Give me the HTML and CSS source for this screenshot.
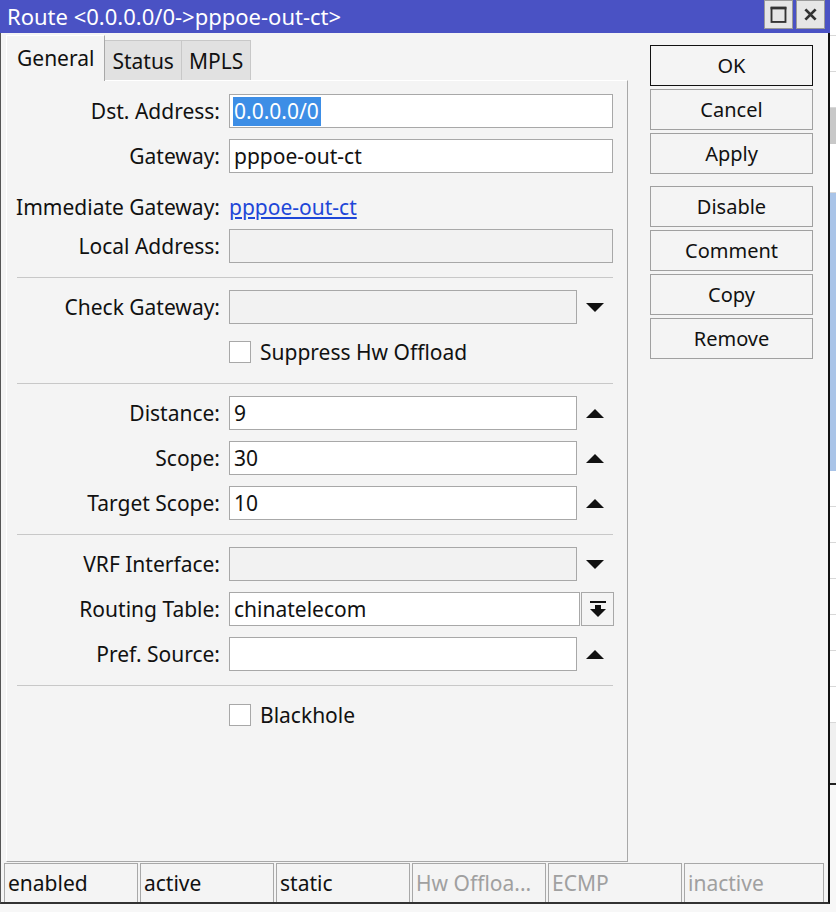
FILE: index.html
```html
<!DOCTYPE html>
<html lang="en">
<head>
  <meta charset="UTF-8" />
  <title>Route &lt;0.0.0.0/0-&gt;pppoe-out-ct&gt;</title>
  <link rel="stylesheet" href="styles.css">
</head>
<body>
  <div class="desk">
    <div class="window">
      <div class="titlebar">
        <span class="title">Route &lt;0.0.0.0/0-&gt;pppoe-out-ct&gt;</span>
        <div class="win-btns">
          <button class="win-btn" title="Maximize">
            <svg width="29" height="29" viewBox="0 0 29 29">
              <rect x="7" y="7.5" width="15" height="15" fill="none" stroke="#333" stroke-width="2"/>
              <rect x="6" y="6" width="17" height="3" fill="#333"/>
            </svg>
          </button>
          <button class="win-btn" title="Close">
            <svg width="29" height="29" viewBox="0 0 29 29">
              <path d="M9 9 L20 20 M20 9 L9 20" stroke="#333" stroke-width="3" fill="none"/>
            </svg>
          </button>
        </div>
      </div>

      <div class="frame">
        <div class="content">
          <div class="main">
            <div class="tabs">
              <div class="tab active">General</div>
              <div class="tab">Status</div>
              <div class="tab">MPLS</div>
            </div>

            <div class="panel">
              <div class="row">
                <label class="lbl">Dst. Address:</label>
                <div class="field"><span class="sel">0.0.0.0/0</span></div>
              </div>
              <div class="row">
                <label class="lbl">Gateway:</label>
                <div class="field">pppoe-out-ct</div>
              </div>
              <div class="row info">
                <label class="lbl">Immediate Gateway:</label>
                <a class="link" href="#">pppoe-out-ct</a>
              </div>
              <div class="row after-info">
                <label class="lbl">Local Address:</label>
                <div class="field ro"></div>
              </div>

              <div class="sep"></div>

              <div class="row first">
                <label class="lbl">Check Gateway:</label>
                <div class="field ro short"></div>
                <span class="spin">
                  <svg width="18" height="9" viewBox="0 0 18 9"><polygon points="0,0 18,0 9,9" fill="#111"/></svg>
                </span>
              </div>
              <div class="row check">
                <span class="box"></span>
                <span>Suppress Hw Offload</span>
              </div>

              <div class="sep"></div>

              <div class="row first">
                <label class="lbl">Distance:</label>
                <div class="field short">9</div>
                <span class="spin">
                  <svg width="18" height="9" viewBox="0 0 18 9"><polygon points="0,9 18,9 9,0" fill="#111"/></svg>
                </span>
              </div>
              <div class="row">
                <label class="lbl">Scope:</label>
                <div class="field short">30</div>
                <span class="spin">
                  <svg width="18" height="9" viewBox="0 0 18 9"><polygon points="0,9 18,9 9,0" fill="#111"/></svg>
                </span>
              </div>
              <div class="row">
                <label class="lbl">Target Scope:</label>
                <div class="field short">10</div>
                <span class="spin">
                  <svg width="18" height="9" viewBox="0 0 18 9"><polygon points="0,9 18,9 9,0" fill="#111"/></svg>
                </span>
              </div>

              <div class="sep"></div>

              <div class="row first">
                <label class="lbl">VRF Interface:</label>
                <div class="field ro short"></div>
                <span class="spin">
                  <svg width="18" height="9" viewBox="0 0 18 9"><polygon points="0,0 18,0 9,9" fill="#111"/></svg>
                </span>
              </div>
              <div class="row">
                <label class="lbl">Routing Table:</label>
                <div class="field combo">chinatelecom</div>
                <button class="drop">
                  <svg width="16" height="17" viewBox="0 0 16 17">
                    <rect x="0" y="0" width="16" height="2" fill="#111"/>
                    <rect x="5" y="4" width="6" height="5" fill="#111"/>
                    <polygon points="0,8 16,8 8,16" fill="#111"/>
                  </svg>
                </button>
              </div>
              <div class="row">
                <label class="lbl">Pref. Source:</label>
                <div class="field short"></div>
                <span class="spin">
                  <svg width="18" height="9" viewBox="0 0 18 9"><polygon points="0,9 18,9 9,0" fill="#111"/></svg>
                </span>
              </div>

              <div class="sep"></div>

              <div class="row check first">
                <span class="box"></span>
                <span>Blackhole</span>
              </div>
            </div>
          </div>

          <div class="actions">
            <button class="btn default">OK</button>
            <button class="btn">Cancel</button>
            <button class="btn">Apply</button>
            <button class="btn group">Disable</button>
            <button class="btn">Comment</button>
            <button class="btn">Copy</button>
            <button class="btn">Remove</button>
          </div>
        </div>

        <div class="status">
          <div class="cell">enabled</div>
          <div class="cell">active</div>
          <div class="cell">static</div>
          <div class="cell dim">Hw Offloa...</div>
          <div class="cell dim">ECMP</div>
          <div class="cell dim">inactive</div>
        </div>
      </div>
    </div>

    <!-- the list window behind the dialog -->
    <div class="backdrop">
      <div class="bd-row"></div>
      <div class="bd-row"></div>
      <div class="bd-row"></div>
      <div class="bd-head"></div>
      <div class="bd-gap"></div>
      <div class="bd-sel"></div>
      <div class="bd-row"></div>
      <div class="bd-row"></div>
      <div class="bd-row"></div>
      <div class="bd-row"></div>
      <div class="bd-row"></div>
      <div class="bd-row"></div>
      <div class="bd-row"></div>
      <div class="bd-foot"></div>
    </div>
  </div>
</body>
</html>
```

FILE: styles.css
```css
body {
  margin: 0;
  background-color: #f7f7f7;
  font-family: 'Noto Sans', 'Open Sans', sans-serif;
  font-size: 21px;
  color: #111;
}

button {
  font-family: inherit;
  font-size: 20px;
  color: #111;
}

.desk {
  display: flex;
  align-items: flex-start;
  height: 912px;
  overflow: hidden;
}

.window {
  width: 830px;
  flex: none;
}

/* title bar */
.titlebar {
  height: 33px;
  background-color: #4a52c4;
  display: flex;
  justify-content: space-between;
  align-items: flex-start;
  padding-left: 7px;
}

.title {
  color: #fff;
  font-size: 22px;
  line-height: 33px;
  white-space: nowrap;
}

.win-btns {
  display: flex;
  gap: 3px;
  padding-right: 5px;
}

.win-btn {
  width: 29px;
  height: 29px;
  padding: 0;
  background-color: #e6e6e6;
  border: 1px solid #9a9a9a;
  display: flex;
  align-items: center;
  justify-content: center;
}

.win-btn svg {
  display: block;
}

/* dialog body */
.frame {
  background-color: #f4f4f4;
  border-left: 1px solid #555;
  border-right: 2px solid #111;
  border-bottom: 2px solid #333;
}

.content {
  display: flex;
  padding-left: 5px;
}

.main {
  width: 622px;
  padding-top: 2px;
}

.tabs {
  display: flex;
  align-items: flex-end;
  height: 45px;
}

.tab {
  height: 40px;
  line-height: 40px;
  padding: 0 7px;
  background-color: #e1e1e1;
  border-top: 1px solid #c8c8c8;
  border-right: 1px solid #c8c8c8;
  box-sizing: border-box;
}

.tab.active {
  height: 46px;
  line-height: 44px;
  padding: 0 10px;
  background-color: #f4f4f4;
  border-top: 1px solid #fff;
  border-left: 1px solid #fff;
  border-right: 1px solid #a8a8a8;
  margin-bottom: -1px;
  position: relative;
}

.panel {
  height: 782px;
  box-sizing: border-box;
  border: 1px solid;
  border-color: #fff #a8a8a8 #a8a8a8 #fff;
  padding-top: 13px;
}

.row {
  display: flex;
  align-items: center;
  height: 34px;
  margin-top: 11px;
}

.panel > .row:first-child,
.row.first {
  margin-top: 0;
}

.row.info {
  margin-top: 17px;
}

.row.after-info {
  margin-top: 5px;
}

.lbl {
  width: 213px;
  margin-right: 9px;
  text-align: right;
  white-space: nowrap;
  flex: none;
}

.field {
  width: 384px;
  height: 34px;
  box-sizing: border-box;
  border: 1px solid #a8a8a8;
  background-color: #fff;
  padding-left: 4px;
  line-height: 32px;
  white-space: nowrap;
  overflow: hidden;
  flex: none;
}

.field.ro {
  background-color: #f2f2f2;
}

.field.short {
  width: 348px;
}

.field.combo {
  width: 351px;
}

.sel {
  display: inline-block;
  background-color: #3d8ee6;
  color: #fff;
  line-height: 29px;
  padding: 0 2px 0 1px;
  margin-left: -1px;
}

.link {
  color: #1e47d8;
  text-decoration: underline;
}

.spin {
  width: 36px;
  display: flex;
  justify-content: center;
  align-items: center;
}

.spin svg {
  display: block;
}

.drop {
  width: 33px;
  height: 34px;
  margin-left: 1px;
  padding: 0;
  background-color: #f4f4f4;
  border: 1px solid #a8a8a8;
  display: flex;
  align-items: center;
  justify-content: center;
}

.drop svg {
  display: block;
}

.row.check {
  padding-left: 222px;
}

.box {
  width: 22px;
  height: 22px;
  box-sizing: border-box;
  border: 1px solid #a8a8a8;
  background-color: #fff;
  margin-right: 9px;
}

.sep {
  width: 596px;
  height: 1px;
  background-color: #c8c8c8;
  margin: 14px 0 12px 10px;
}

/* right column */
.actions {
  width: 163px;
  margin-left: 22px;
  padding-top: 12px;
  display: flex;
  flex-direction: column;
  gap: 3px;
}

.btn {
  height: 41px;
  padding: 0;
  background-color: #f4f4f4;
  border: 1px solid #a0a0a0;
}

.btn.default {
  border-color: #111;
}

.btn.group {
  margin-top: 9px;
}

/* status bar */
.status {
  display: grid;
  grid-template-columns: repeat(5, 134px) 1fr;
  gap: 2px;
  padding: 0 4px 0 3px;
  margin-top: 1px;
}

.cell {
  height: 39px;
  box-sizing: border-box;
  border: 1px solid #a8a8a8;
  border-bottom: none;
  padding-left: 3px;
  line-height: 38px;
  white-space: nowrap;
  overflow: hidden;
}

.cell.dim {
  color: #a0a0a0;
}

/* window peeking out behind */
.backdrop {
  flex: 1;
  display: flex;
  flex-direction: column;
  background-color: #fff;
}

.bd-row {
  height: 35px;
  border-bottom: 1px solid #d8d8d8;
  background-color: #fff;
}

.bd-head {
  height: 36px;
  background-color: #c8c8c8;
}

.bd-gap {
  height: 48px;
  border-bottom: 1px solid #d8d8d8;
}

.bd-sel {
  height: 278px;
  background-color: #a9c4e8;
}

.bd-foot {
  height: 60px;
  border-bottom: 2px solid #222;
  background-color: #f0f0f0;
}
```
